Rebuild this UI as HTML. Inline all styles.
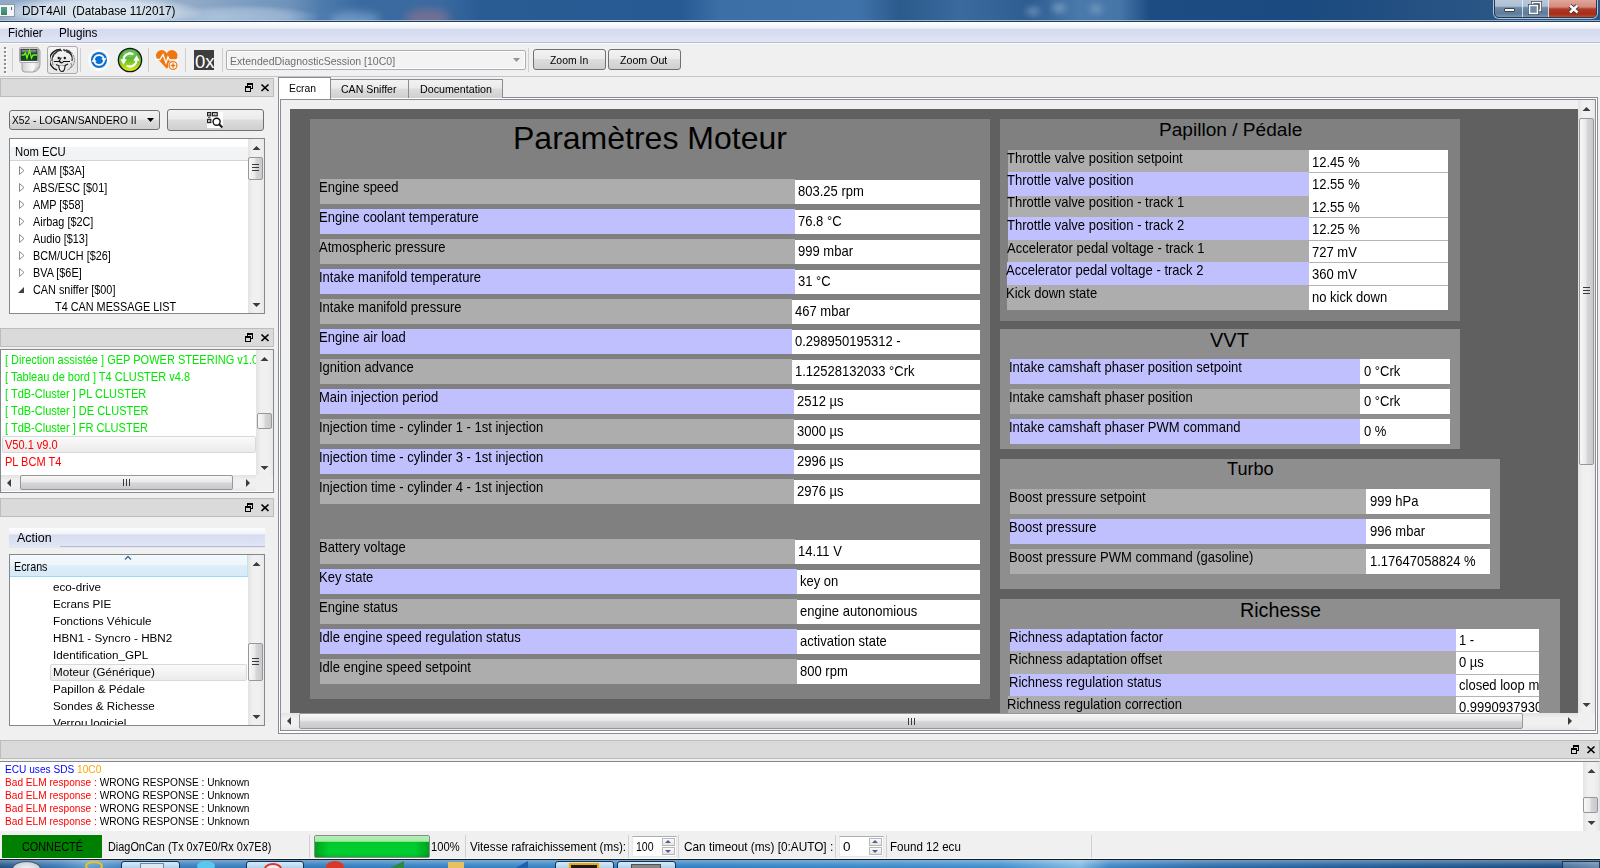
<!DOCTYPE html><html><head><meta charset="utf-8"><style>
*{margin:0;padding:0;box-sizing:border-box}
html,body{width:1600px;height:868px;overflow:hidden;background:#f0f0f0}
body{position:relative;font-family:"Liberation Sans",sans-serif;font-size:11px;color:#000}
div{position:absolute}
.t{white-space:nowrap;line-height:15px}
.lb{white-space:nowrap;font-size:14.3px;line-height:15px;transform:scaleX(0.91);transform-origin:0 0}
.dk{background:#dadada;border:1px solid #c5c5c5}
.sep{width:1px;background:#c8c8c8}
</style></head><body><div style="left:0;top:0;width:1600px;height:21px;overflow:hidden;background:radial-gradient(ellipse 105px 17px at 98px 12px,rgba(228,236,244,0.97) 0%,rgba(214,226,238,0.9) 65%,rgba(200,215,232,0) 100%),radial-gradient(ellipse 80px 12px at 240px 17px,rgba(185,205,228,0.85) 0%,rgba(185,205,228,0.5) 60%,rgba(185,205,228,0) 100%),linear-gradient(90deg,#8fa9c6 0px,#9ab2cc 150px,#8ea8c6 200px,#7b9cc0 250px,#6f92bb 290px,#4f7cad 320px,#3a6aa0 360px,#3a6aa0 440px,#2a5c94 480px,#275a92 680px,#3c6fa6 720px,#3f72a8 860px,#2b5a8c 900px,#3a6a9e 960px,#2d5d91 1030px,#4a7aab 1080px,#4676a8 1120px,#1d4c82 1150px,#1a4a7f 1300px,#234f82 1400px,#2a5686 1490px)"><div style="left:330px;top:12px;width:50px;height:16px;border-radius:50%;background:rgba(180,210,240,0.4);filter:blur(4px)"></div><div style="left:225px;top:10px;width:60px;height:14px;border-radius:50%;background:rgba(150,175,205,0.5);filter:blur(4px)"></div><div style="left:405px;top:9px;width:45px;height:18px;border-radius:50%;background:rgba(200,120,130,0.4);filter:blur(4px)"></div><div style="left:1026px;top:7px;width:14px;height:9px;border-radius:50%;background:rgba(200,220,240,0.35);filter:blur(3px)"></div><div style="left:1052px;top:3px;width:14px;height:10px;border-radius:50%;background:rgba(200,220,240,0.35);filter:blur(3px)"></div><div style="left:1090px;top:4px;width:12px;height:10px;border-radius:50%;background:rgba(200,220,240,0.3);filter:blur(3px)"></div></div>
<div style="left:0;top:20px;width:1600px;height:1px;background:rgba(190,215,240,0.7)"></div>
<div style="left:0;top:21px;width:1600px;height:1px;background:#243c5a"></div>
<div style="left:0;top:4px;width:15px;height:13px;background:#f4f4f4;border:1px solid #8d99a6;border-left:none"><div style="left:1px;top:2px;width:6px;height:8px;background:linear-gradient(#5aa0a0,#3c8060)"></div><div style="left:11px;top:2px;width:1px;height:3px;background:#2a7a8a"></div></div>
<div class="t" style="left:21.50px;top:2.97px;font-size:13.08px;line-height:16px;transform:scaleX(0.8995);transform-origin:0 0;">DDT4All&nbsp; (Database 11/2017)</div>
<div style="left:1493px;top:-3px;width:105px;height:22px;border:1px solid rgba(230,240,250,0.7);border-top:none;border-radius:0 0 6px 6px"></div>
<div style="left:1494px;top:-2px;width:103px;height:20px;border:1px solid #2a3a50;border-radius:0 0 5px 5px;overflow:hidden;background:linear-gradient(#bccbdb,#aebfd1 40%,#6f8ba8 48%,#5d7b9b 80%,#7a96b2)"><div style="left:54px;top:0;width:49px;height:20px;background:linear-gradient(#e3aaa0,#d48b7e 40%,#b03a25 50%,#a52d1a 75%,#c8603f)"></div><div style="left:27px;top:0;width:1px;height:20px;background:rgba(230,240,250,0.8)"></div><div style="left:53px;top:0;width:1px;height:20px;background:rgba(230,240,250,0.8)"></div></div>
<div style="left:1504px;top:8px;width:11px;height:4px;background:#fafafa;border:1px solid #3a4550;border-radius:1px"></div>
<svg style="position:absolute;left:1528px;top:1px" width="14" height="14"><rect x="4.5" y="1.5" width="8" height="8" fill="none" stroke="#3a4550" stroke-width="3"/><rect x="4.5" y="1.5" width="8" height="8" fill="none" stroke="#fafafa" stroke-width="1.5"/><rect x="1.5" y="4.5" width="8" height="8" fill="#6f8ba8" stroke="#3a4550" stroke-width="3"/><rect x="1.5" y="4.5" width="8" height="8" fill="#6f8ba8" stroke="#fafafa" stroke-width="1.5"/></svg>
<svg style="position:absolute;left:1566px;top:2px" width="16" height="13"><path d="M4,3.5 L11.5,10.5 M11.5,3.5 L4,10.5" stroke="#3a2a2a" stroke-width="4.4" stroke-linecap="butt"/><path d="M4,3.5 L11.5,10.5 M11.5,3.5 L4,10.5" stroke="#fafafa" stroke-width="2.6" stroke-linecap="butt"/></svg>
<div style="left:0;top:22px;width:1600px;height:20px;background:linear-gradient(#ffffff 0,#f2f4fa 25%,#e9ecf6 33%,#d4daee 36%,#dfe5f5 100%)"></div>
<div style="left:0;top:42px;width:1600px;height:1px;background:#b6bccc"></div>
<div class="t" style="left:8.40px;top:24.57px;font-size:12.79px;line-height:15px;transform:scaleX(0.9043);transform-origin:0 0;">Fichier</div>
<div class="t" style="left:59.40px;top:24.57px;font-size:12.79px;line-height:15px;transform:scaleX(0.9153);transform-origin:0 0;">Plugins</div>
<div style="left:0;top:43px;width:1600px;height:33px;background:#f0f0f0"></div>
<div style="left:0;top:76px;width:1600px;height:1px;background:#c4c4c4"></div>
<div style="left:4px;top:47px;width:2px;height:2px;background:#8c8c8c;box-shadow:1px 1px 0 #fff"></div>
<div style="left:4px;top:51px;width:2px;height:2px;background:#8c8c8c;box-shadow:1px 1px 0 #fff"></div>
<div style="left:4px;top:55px;width:2px;height:2px;background:#8c8c8c;box-shadow:1px 1px 0 #fff"></div>
<div style="left:4px;top:59px;width:2px;height:2px;background:#8c8c8c;box-shadow:1px 1px 0 #fff"></div>
<div style="left:4px;top:63px;width:2px;height:2px;background:#8c8c8c;box-shadow:1px 1px 0 #fff"></div>
<div style="left:4px;top:67px;width:2px;height:2px;background:#8c8c8c;box-shadow:1px 1px 0 #fff"></div>
<div style="left:4px;top:71px;width:2px;height:2px;background:#8c8c8c;box-shadow:1px 1px 0 #fff"></div>
<div style="left:0;top:43px;width:1600px;height:1px;background:#fbfbfb"></div>
<div style="left:12px;top:48px;width:1px;height:24px;background:#cfcfcf"></div>
<div style="left:80px;top:48px;width:1px;height:24px;background:#cfcfcf"></div>
<div style="left:148px;top:48px;width:1px;height:24px;background:#cfcfcf"></div>
<div style="left:185px;top:48px;width:1px;height:24px;background:#cfcfcf"></div>
<div style="left:222px;top:48px;width:1px;height:24px;background:#cfcfcf"></div>
<div style="left:528px;top:48px;width:1px;height:24px;background:#cfcfcf"></div>
<svg style="position:absolute;left:19px;top:47px" width="24" height="27"><defs><linearGradient id="scr" x1="0" y1="0" x2="0" y2="1"><stop offset="0" stop-color="#a9b3ae"/><stop offset="0.45" stop-color="#0b3a1e"/><stop offset="1" stop-color="#0b5a2a"/></linearGradient><linearGradient id="bdy" x1="0" y1="0" x2="1" y2="0"><stop offset="0" stop-color="#d0d0d0"/><stop offset="0.6" stop-color="#fafafa"/><stop offset="1" stop-color="#c8c8c8"/></linearGradient></defs><path d="M3,15 L3,22 Q3,25 6,25 L14,25 Q21,24 21,17 L21,4 Q21,2 19,2 Z" fill="url(#bdy)" stroke="#a0a0a0" stroke-width="1"/><path d="M14,25 Q17,20 21,20" fill="none" stroke="#b0b0b0" stroke-width="1"/><rect x="0.5" y="0.5" width="19" height="15" rx="1.5" fill="#f4f4f4" stroke="#a9a9a9"/><rect x="2" y="2.3" width="16" height="11" fill="url(#scr)" stroke="#252525" stroke-width="1"/><polyline points="2.5,8 5,8 6.5,6 8,11 10.5,3.5 12.5,11 14,8 18,8" fill="none" stroke="#7ef01a" stroke-width="1.3"/></svg>
<div style="left:47px;top:46px;width:31px;height:28px;border:1px solid #a9a9a9;border-radius:3px;background:linear-gradient(#f6f6f6,#eeeeee 45%,#e4e4e4 50%,#e9e9e9)"></div>
<svg style="position:absolute;left:50px;top:48px" width="25" height="25"><path d="M11,1.5 A10.5,10.5 0 0 0 7,22" fill="none" stroke="#1e1e1e" stroke-width="1.4"/><path d="M13,1.5 A10.5,10.5 0 0 1 17,22" fill="none" stroke="#6a6a6a" stroke-width="1" stroke-dasharray="2,1"/><path d="M3,9 Q5,3 11,1.5 M13,2 Q19,2 22,8 M2,13 Q2,7 5,5 M20,4 Q23,8 22,13 M5,6 Q9,1 12,3 M14,3 Q18,1 21,5 M16,4 Q20,4 22,9" fill="none" stroke="#333" stroke-width="1.1"/><path d="M21,15 Q23,18 20,20 M3,17 Q2,15 3,13" fill="none" stroke="#777" stroke-width="0.9"/><circle cx="8.7" cy="10" r="1.2" fill="#111"/><circle cx="14.8" cy="10" r="1.2" fill="#111"/><path d="M11.3,9.5 L9,13.3 L11.5,14.5" fill="none" stroke="#111" stroke-width="1.1"/><path d="M4,13.5 H9.5 Q11.5,16.5 13.5,13.5 H20" fill="none" stroke="#111" stroke-width="1.2"/><path d="M6,16.5 Q12,20 18,16" fill="none" stroke="#222" stroke-width="1.1"/><path d="M8.8,17.5 Q9,23.5 12,23.5 Q15,23.5 15,17.5" fill="#eee" stroke="#111" stroke-width="1.1"/></svg>
<svg style="position:absolute;left:87px;top:48px" width="24" height="24"><circle cx="12" cy="12" r="11" fill="#fbfbfb" opacity="0.85"/><circle cx="12" cy="12" r="8" fill="#0a6fd0"/><path d="M7.1,11.1 A5,5 0 0 1 16.9,11.1" fill="none" stroke="#fff" stroke-width="1.8"/><polygon points="14.4,10.3 19.6,10.3 17,14" fill="#fff"/><path d="M16.9,12.9 A5,5 0 0 1 7.1,12.9" fill="none" stroke="#fff" stroke-width="1.8"/><polygon points="4.4,13.7 9.6,13.7 7,10" fill="#fff"/></svg>
<svg style="position:absolute;left:117px;top:47px" width="26" height="26"><defs><linearGradient id="grn" x1="0" y1="0" x2="0" y2="1"><stop offset="0" stop-color="#3aa83a"/><stop offset="0.5" stop-color="#66be30"/><stop offset="0.85" stop-color="#b8e018"/><stop offset="1" stop-color="#e8f010"/></linearGradient></defs><circle cx="13" cy="13" r="12.3" fill="#121212"/><circle cx="13" cy="13" r="11" fill="url(#grn)"/><ellipse cx="13" cy="6.5" rx="7" ry="3.5" fill="#fff" opacity="0.18"/><path d="M16.25,7.37 A6.5,6.5 0 0 0 6.5,12.5" fill="none" stroke="#fff" stroke-width="2.1"/><polygon points="3.3,12.3 9.7,12.3 6.5,17.8" fill="#fff"/><path d="M9.75,18.63 A6.5,6.5 0 0 0 19.5,13.5" fill="none" stroke="#fff" stroke-width="2.1"/><polygon points="16.3,13.7 22.7,13.7 19.5,8.2" fill="#fff"/></svg>
<svg style="position:absolute;left:155px;top:49px" width="25" height="22"><circle cx="6.6" cy="6.6" r="5.6" fill="#ee7711"/><circle cx="16.9" cy="6.6" r="5.6" fill="#ee7711"/><polygon points="1.2,8.6 22.3,8.6 11.75,19.8" fill="#ee7711"/><polyline points="0.5,10.5 5,10.5 8,5.5 11,14 13,8 14.5,11 23,11" fill="none" stroke="#fff" stroke-width="1.3"/><circle cx="18" cy="16.5" r="5" fill="#fff"/><circle cx="18" cy="16.5" r="3.9" fill="none" stroke="#ee7711" stroke-width="1.3"/><path d="M18,14.2 V18.8 M15.7,16.5 H20.3" stroke="#ee7711" stroke-width="1.5"/></svg>
<div style="left:194px;top:50px;width:20px;height:20px;background:#3d3d3d;overflow:hidden"><div class="t" style="left:1px;top:3px;font-size:18.5px;line-height:18px;color:#fff">0x</div></div>
<div style="left:226px;top:50px;width:300px;height:20px;border:1px solid #a9aeb4;border-radius:2px;background:#f3f3f3;box-shadow:inset 0 0 0 1px #fff"></div>
<div class="t" style="left:229.60px;top:53.52px;font-size:11.48px;line-height:14px;transform:scaleX(0.9184);transform-origin:0 0;color:#6e6e6e">ExtendedDiagnosticSession [10C0]</div>
<svg style="position:absolute;left:512px;top:57px" width="10" height="7"><polygon points="1,1 8,1 4.5,5" fill="#959595"/></svg>
<div style="left:533px;top:49px;width:73px;height:21px;border:1px solid #707070;border-radius:3px;background:linear-gradient(#f2f2f2,#ebebeb 45%,#dddddd 50%,#cfcfcf)"></div>
<div class="t" style="left:549.80px;top:53.47px;font-size:11.63px;line-height:14px;transform:scaleX(0.8951);transform-origin:0 0;">Zoom In</div>
<div style="left:608px;top:49px;width:73px;height:21px;border:1px solid #707070;border-radius:3px;background:linear-gradient(#f2f2f2,#ebebeb 45%,#dddddd 50%,#cfcfcf)"></div>
<div class="t" style="left:620.40px;top:53.47px;font-size:11.63px;line-height:14px;transform:scaleX(0.9151);transform-origin:0 0;">Zoom Out</div>
<div style="left:0px;top:78px;width:274px;height:19px;background:#dadada;border:1px solid #bdbdbd"></div>
<svg style="position:absolute;left:245px;top:82px" width="26" height="11"><rect x="2.5" y="1.5" width="5" height="5" fill="none" stroke="#000" stroke-width="1"/><rect x="2" y="1" width="6" height="2" fill="#000"/><rect x="0.5" y="4.5" width="5" height="5" fill="#dadada" stroke="#000" stroke-width="1"/><rect x="0" y="4" width="6" height="2" fill="#000"/><path d="M16.5,2.5 L23.5,9 M23.5,2.5 L16.5,9" stroke="#000" stroke-width="1.7"/></svg>
<div style="left:9px;top:110px;width:151px;height:20px;border:1px solid #707070;border-radius:3px;background:linear-gradient(#f2f2f2,#ebebeb 45%,#dddddd 50%,#cfcfcf)"></div>
<div class="t" style="left:12.40px;top:113.37px;font-size:11.34px;line-height:14px;transform:scaleX(0.8990);transform-origin:0 0;">X52 - LOGAN/SANDERO II</div>
<svg style="position:absolute;left:146px;top:117px" width="10" height="7"><polygon points="1,1 8,1 4.5,5" fill="#000"/></svg>
<div style="left:167px;top:109px;width:97px;height:22px;border:1px solid #707070;border-radius:3px;background:linear-gradient(#f2f2f2,#ebebeb 45%,#dddddd 50%,#cfcfcf)"></div>
<div style="left:207px;top:112px;width:16px;height:16px;background:#fff"></div>
<svg style="position:absolute;left:207px;top:112px" width="17" height="17"><rect x="0.6" y="0.6" width="3.2" height="3.2" fill="none" stroke="#222" stroke-width="1.2"/><rect x="1.8" y="1.8" width="0.9" height="0.9" fill="#222"/><rect x="5.6" y="0.6" width="4.6" height="3.2" fill="none" stroke="#222" stroke-width="1.2"/><rect x="7.4" y="1.7" width="1" height="1" fill="#222"/><rect x="0.6" y="7.4" width="3.2" height="3.2" fill="none" stroke="#222" stroke-width="1.2"/><rect x="1.8" y="8.6" width="0.9" height="0.9" fill="#222"/><path d="M1,5.6 H3.4" stroke="#333" stroke-width="0.9"/><circle cx="9.6" cy="9.7" r="3.5" fill="#fff" stroke="#111" stroke-width="1.4"/><path d="M12.1,12.3 L15.4,15.4" stroke="#111" stroke-width="2"/></svg>
<div style="left:9px;top:138px;width:256px;height:176px;border:1px solid #828790;background:#fff"></div>
<div style="left:10px;top:139px;width:238px;height:22px;background:linear-gradient(#ffffff,#ffffff 35%,#f3f4f6 40%,#f1f2f4);border-bottom:1px solid #d5d5d5"></div>
<div class="t" style="left:14.70px;top:143.57px;font-size:12.79px;line-height:15px;transform:scaleX(0.8808);transform-origin:0 0;">Nom ECU</div>
<div style="left:248px;top:139px;width:16px;height:174px;background:linear-gradient(90deg,#e3e3e3,#f0f0f0 30%,#f0f0f0 70%,#e8e8e8)"></div>
<svg style="position:absolute;left:252px;top:145px" width="9" height="6"><polygon points="0.5,5 8.5,5 4.5,1" fill="#3c3c3c"/></svg>
<svg style="position:absolute;left:252px;top:302px" width="9" height="6"><polygon points="0.5,1 8.5,1 4.5,5" fill="#3c3c3c"/></svg>
<div style="left:248px;top:157px;width:15px;height:23px;border:1px solid #979797;border-radius:2px;background:linear-gradient(90deg,#f8f8f8,#e9e9e9 45%,#d6d6d8 55%,#c9c9cc)"></div>
<div style="left:252px;top:164px;width:7px;height:1px;background:#3a3a3a"></div>
<div style="left:252px;top:167px;width:7px;height:1px;background:#3a3a3a"></div>
<div style="left:252px;top:170px;width:7px;height:1px;background:#3a3a3a"></div>
<div class="t" style="left:33.40px;top:164.27px;font-size:12.21px;line-height:15px;transform:scaleX(0.8891);transform-origin:0 0;">AAM [$3A]</div>
<svg style="position:absolute;left:18px;top:165px" width="8" height="10"><path d="M1.5,1.5 L6,5.5 L1.5,9.5 Z" fill="#fff" stroke="#8a8a8a" stroke-width="1"/></svg>
<div class="t" style="left:33.40px;top:181.27px;font-size:12.21px;line-height:15px;transform:scaleX(0.8891);transform-origin:0 0;">ABS/ESC [$01]</div>
<svg style="position:absolute;left:18px;top:182px" width="8" height="10"><path d="M1.5,1.5 L6,5.5 L1.5,9.5 Z" fill="#fff" stroke="#8a8a8a" stroke-width="1"/></svg>
<div class="t" style="left:33.40px;top:198.27px;font-size:12.21px;line-height:15px;transform:scaleX(0.8891);transform-origin:0 0;">AMP [$58]</div>
<svg style="position:absolute;left:18px;top:199px" width="8" height="10"><path d="M1.5,1.5 L6,5.5 L1.5,9.5 Z" fill="#fff" stroke="#8a8a8a" stroke-width="1"/></svg>
<div class="t" style="left:33.40px;top:215.27px;font-size:12.21px;line-height:15px;transform:scaleX(0.8891);transform-origin:0 0;">Airbag [$2C]</div>
<svg style="position:absolute;left:18px;top:216px" width="8" height="10"><path d="M1.5,1.5 L6,5.5 L1.5,9.5 Z" fill="#fff" stroke="#8a8a8a" stroke-width="1"/></svg>
<div class="t" style="left:33.40px;top:232.27px;font-size:12.21px;line-height:15px;transform:scaleX(0.8891);transform-origin:0 0;">Audio [$13]</div>
<svg style="position:absolute;left:18px;top:233px" width="8" height="10"><path d="M1.5,1.5 L6,5.5 L1.5,9.5 Z" fill="#fff" stroke="#8a8a8a" stroke-width="1"/></svg>
<div class="t" style="left:33.40px;top:249.27px;font-size:12.21px;line-height:15px;transform:scaleX(0.8891);transform-origin:0 0;">BCM/UCH [$26]</div>
<svg style="position:absolute;left:18px;top:250px" width="8" height="10"><path d="M1.5,1.5 L6,5.5 L1.5,9.5 Z" fill="#fff" stroke="#8a8a8a" stroke-width="1"/></svg>
<div class="t" style="left:33.40px;top:266.27px;font-size:12.21px;line-height:15px;transform:scaleX(0.8891);transform-origin:0 0;">BVA [$6E]</div>
<svg style="position:absolute;left:18px;top:267px" width="8" height="10"><path d="M1.5,1.5 L6,5.5 L1.5,9.5 Z" fill="#fff" stroke="#8a8a8a" stroke-width="1"/></svg>
<div class="t" style="left:33.40px;top:283.27px;font-size:12.21px;line-height:15px;transform:scaleX(0.8891);transform-origin:0 0;">CAN sniffer [$00]</div>
<svg style="position:absolute;left:18px;top:286px" width="8" height="8"><path d="M6,1 L6,7 L0,7 Z" fill="#404040"/></svg>
<div style="left:10px;top:298px;width:238px;height:15px;overflow:hidden"><div class="t" style="left:44.50px;top:2.27px;font-size:12.21px;line-height:15px;transform:scaleX(0.8891);transform-origin:0 0;">T4 CAN MESSAGE LIST</div></div>
<div style="left:0px;top:328px;width:274px;height:19px;background:#dadada;border:1px solid #bdbdbd"></div>
<svg style="position:absolute;left:245px;top:332px" width="26" height="11"><rect x="2.5" y="1.5" width="5" height="5" fill="none" stroke="#000" stroke-width="1"/><rect x="2" y="1" width="6" height="2" fill="#000"/><rect x="0.5" y="4.5" width="5" height="5" fill="#dadada" stroke="#000" stroke-width="1"/><rect x="0" y="4" width="6" height="2" fill="#000"/><path d="M16.5,2.5 L23.5,9 M23.5,2.5 L16.5,9" stroke="#000" stroke-width="1.7"/></svg>
<div style="left:0px;top:349px;width:274px;height:144px;border:1px solid #828790;background:#fff"></div>
<div style="left:2px;top:436px;width:254px;height:17px;border:1px solid #d9d9d9;border-radius:2px;background:linear-gradient(#fafafa,#ebebeb)"></div>
<div style="left:1px;top:350px;width:255px;height:125px;overflow:hidden"><div class="t" style="left:3.60px;top:2.82px;font-size:12.06px;line-height:14px;transform:scaleX(0.9138);transform-origin:0 0;color:#00e800">[ Direction assistée ] GEP POWER STEERING v1.0</div><div class="t" style="left:3.60px;top:19.82px;font-size:12.06px;line-height:14px;transform:scaleX(0.9138);transform-origin:0 0;color:#00e800">[ Tableau de bord ] T4 CLUSTER v4.8</div><div class="t" style="left:3.60px;top:36.82px;font-size:12.06px;line-height:14px;transform:scaleX(0.9138);transform-origin:0 0;color:#00e800">[ TdB-Cluster ] PL CLUSTER</div><div class="t" style="left:3.60px;top:53.82px;font-size:12.06px;line-height:14px;transform:scaleX(0.9138);transform-origin:0 0;color:#00e800">[ TdB-Cluster ] DE CLUSTER</div><div class="t" style="left:3.60px;top:70.82px;font-size:12.06px;line-height:14px;transform:scaleX(0.9138);transform-origin:0 0;color:#00e800">[ TdB-Cluster ] FR CLUSTER</div><div class="t" style="left:3.60px;top:87.82px;font-size:12.06px;line-height:14px;transform:scaleX(0.9138);transform-origin:0 0;color:#ff0000">V50.1 v9.0</div><div class="t" style="left:3.60px;top:104.82px;font-size:12.06px;line-height:14px;transform:scaleX(0.9138);transform-origin:0 0;color:#ff0000">PL BCM T4</div></div>
<div style="left:256px;top:350px;width:17px;height:126px;background:linear-gradient(90deg,#e3e3e3,#f0f0f0 30%,#f0f0f0 70%,#e8e8e8)"></div>
<svg style="position:absolute;left:260px;top:356px" width="9" height="6"><polygon points="0.5,5 8.5,5 4.5,1" fill="#3c3c3c"/></svg>
<svg style="position:absolute;left:260px;top:465px" width="9" height="6"><polygon points="0.5,1 8.5,1 4.5,5" fill="#3c3c3c"/></svg>
<div style="left:257px;top:413px;width:15px;height:16px;border:1px solid #979797;border-radius:2px;background:linear-gradient(90deg,#f8f8f8,#e9e9e9 45%,#d6d6d8 55%,#c9c9cc)"></div>
<div style="left:1px;top:475px;width:255px;height:16px;background:linear-gradient(#e3e3e3,#f0f0f0 30%,#f0f0f0 70%,#e8e8e8)"></div>
<div style="left:7px;top:479px;width:0;height:0;border-top:4px solid transparent;border-bottom:4px solid transparent;border-right:4px solid #3c3c3c"></div>
<div style="left:246px;top:479px;width:0;height:0;border-top:4px solid transparent;border-bottom:4px solid transparent;border-left:4px solid #3c3c3c"></div>
<div style="left:20px;top:475px;width:213px;height:15px;border:1px solid #979797;border-radius:2px;background:linear-gradient(#f8f8f8,#e9e9e9 45%,#d6d6d8 55%,#c9c9cc)"></div>
<div style="left:123px;top:479px;width:1px;height:7px;background:#3a3a3a"></div>
<div style="left:126px;top:479px;width:1px;height:7px;background:#3a3a3a"></div>
<div style="left:129px;top:479px;width:1px;height:7px;background:#3a3a3a"></div>
<div style="left:256px;top:475px;width:17px;height:16px;background:#f0f0f0"></div>
<div style="left:0px;top:498px;width:274px;height:19px;background:#dadada;border:1px solid #bdbdbd"></div>
<svg style="position:absolute;left:245px;top:502px" width="26" height="11"><rect x="2.5" y="1.5" width="5" height="5" fill="none" stroke="#000" stroke-width="1"/><rect x="2" y="1" width="6" height="2" fill="#000"/><rect x="0.5" y="4.5" width="5" height="5" fill="#dadada" stroke="#000" stroke-width="1"/><rect x="0" y="4" width="6" height="2" fill="#000"/><path d="M16.5,2.5 L23.5,9 M23.5,2.5 L16.5,9" stroke="#000" stroke-width="1.7"/></svg>
<div style="left:9px;top:528px;width:256px;height:20px;background:linear-gradient(#fdfdfe 0,#f1f3fa 30%,#d6dcef 34%,#e3e7f5 100%)"></div>
<div style="left:60px;top:546px;width:205px;height:1px;background:#b4bdd3"></div>
<div class="t" style="left:17.00px;top:531.47px;font-size:12.50px;line-height:15px;transform:scaleX(0.9957);transform-origin:0 0;">Action</div>
<div style="left:9px;top:554px;width:256px;height:172px;border:1px solid #828790;background:#fff"></div>
<div style="left:10px;top:555px;width:238px;height:22px;background:linear-gradient(#f4f9fd 0,#eef6fb 45%,#dcedf8 52%,#d8eaf6 100%);border-bottom:1px solid #96d9f9;border-right:1px solid #c0e2f5"></div>
<svg style="position:absolute;left:124px;top:555px" width="9" height="6"><path d="M1,4.5 L4,1.5 L7,4.5" fill="none" stroke="#4a6f8c" stroke-width="1.5"/></svg>
<div class="t" style="left:14.40px;top:558.77px;font-size:12.79px;line-height:15px;transform:scaleX(0.8422);transform-origin:0 0;">Ecrans</div>
<div style="left:248px;top:555px;width:16px;height:170px;background:linear-gradient(90deg,#e3e3e3,#f0f0f0 30%,#f0f0f0 70%,#e8e8e8)"></div>
<svg style="position:absolute;left:252px;top:561px" width="9" height="6"><polygon points="0.5,5 8.5,5 4.5,1" fill="#3c3c3c"/></svg>
<svg style="position:absolute;left:252px;top:714px" width="9" height="6"><polygon points="0.5,1 8.5,1 4.5,5" fill="#3c3c3c"/></svg>
<div style="left:248px;top:643px;width:15px;height:38px;border:1px solid #979797;border-radius:2px;background:linear-gradient(90deg,#f8f8f8,#e9e9e9 45%,#d6d6d8 55%,#c9c9cc)"></div>
<div style="left:252px;top:658px;width:7px;height:1px;background:#3a3a3a"></div>
<div style="left:252px;top:661px;width:7px;height:1px;background:#3a3a3a"></div>
<div style="left:252px;top:664px;width:7px;height:1px;background:#3a3a3a"></div>
<div style="left:50px;top:664px;width:197px;height:17px;border:1px solid #d9d9d9;border-radius:2px;background:linear-gradient(#fafafa,#ebebeb)"></div>
<div style="left:10px;top:577px;width:238px;height:148px;overflow:hidden"><div class="t" style="left:43.30px;top:3.37px;font-size:11.63px;line-height:14px;transform:scaleX(1.0034);transform-origin:0 0;">eco-drive</div><div class="t" style="left:43.30px;top:20.37px;font-size:11.63px;line-height:14px;transform:scaleX(1.0034);transform-origin:0 0;">Ecrans PIE</div><div class="t" style="left:43.30px;top:37.37px;font-size:11.63px;line-height:14px;transform:scaleX(1.0034);transform-origin:0 0;">Fonctions Véhicule</div><div class="t" style="left:43.30px;top:54.37px;font-size:11.63px;line-height:14px;transform:scaleX(1.0034);transform-origin:0 0;">HBN1 - Syncro - HBN2</div><div class="t" style="left:43.30px;top:71.37px;font-size:11.63px;line-height:14px;transform:scaleX(1.0034);transform-origin:0 0;">Identification_GPL</div><div class="t" style="left:43.30px;top:88.37px;font-size:11.63px;line-height:14px;transform:scaleX(1.0034);transform-origin:0 0;">Moteur (Générique)</div><div class="t" style="left:43.30px;top:105.37px;font-size:11.63px;line-height:14px;transform:scaleX(1.0034);transform-origin:0 0;">Papillon &amp; Pédale</div><div class="t" style="left:43.30px;top:122.37px;font-size:11.63px;line-height:14px;transform:scaleX(1.0034);transform-origin:0 0;">Sondes &amp; Richesse</div><div class="t" style="left:43.30px;top:139.37px;font-size:11.63px;line-height:14px;transform:scaleX(1.0034);transform-origin:0 0;">Verrou logiciel</div></div>
<div style="left:278px;top:97px;width:320px;height:637px;border:1px solid #898c95;width:1320px;background:#fff"></div>
<div style="left:280px;top:99px;width:1316px;height:632px;border:1px solid #898c95;background:#f0f0f0"></div>
<div style="left:330px;top:79px;width:79px;height:19px;border:1px solid #898c95;border-bottom:none;background:linear-gradient(#f2f2f2,#ebebeb 45%,#dddddd 50%,#cfcfcf)"></div>
<div style="left:408px;top:79px;width:95px;height:19px;border:1px solid #898c95;border-bottom:none;background:linear-gradient(#f2f2f2,#ebebeb 45%,#dddddd 50%,#cfcfcf)"></div>
<div style="left:278px;top:77px;width:53px;height:22px;border:1px solid #898c95;border-bottom:none;background:#fff"></div>
<div class="t" style="left:289.20px;top:81.47px;font-size:11.63px;line-height:14px;transform:scaleX(0.8897);transform-origin:0 0;">Ecran</div>
<div class="t" style="left:340.50px;top:82.47px;font-size:11.63px;line-height:14px;transform:scaleX(0.9074);transform-origin:0 0;">CAN Sniffer</div>
<div class="t" style="left:420.00px;top:82.47px;font-size:11.63px;line-height:14px;transform:scaleX(0.9195);transform-origin:0 0;">Documentation</div>
<div style="left:290px;top:109px;width:1288px;height:604px;background:#606060"></div>
<div style="left:290px;top:109px;width:1288px;height:604px;overflow:hidden">
<div style="left:20px;top:10px;width:680px;height:580px;background:#808080"></div>
<div class="t" style="left:223px;top:11px;font-size:32px;line-height:36px">Paramètres Moteur</div>
<div style="left:30px;top:70px;width:475px;height:25px;background:#adadad"><div class="lb" style="left:-1px;top:1px">Engine speed</div></div>
<div style="left:505px;top:71px;width:185px;height:24px;background:#fff;overflow:hidden;"><div class="lb" style="left:3px;top:4px">803.25 rpm</div></div>
<div style="left:30px;top:100px;width:475px;height:25px;background:#c0c0ff"><div class="lb" style="left:-1px;top:1px">Engine coolant temperature</div></div>
<div style="left:505px;top:101px;width:185px;height:24px;background:#fff;overflow:hidden;"><div class="lb" style="left:3px;top:4px">76.8 °C</div></div>
<div style="left:30px;top:130px;width:475px;height:25px;background:#adadad"><div class="lb" style="left:-1px;top:1px">Atmospheric pressure</div></div>
<div style="left:505px;top:131px;width:185px;height:24px;background:#fff;overflow:hidden;"><div class="lb" style="left:3px;top:4px">999 mbar</div></div>
<div style="left:30px;top:160px;width:475px;height:25px;background:#c0c0ff"><div class="lb" style="left:-1px;top:1px">Intake manifold temperature</div></div>
<div style="left:505px;top:161px;width:185px;height:24px;background:#fff;overflow:hidden;"><div class="lb" style="left:3px;top:4px">31 °C</div></div>
<div style="left:30px;top:190px;width:472px;height:25px;background:#adadad"><div class="lb" style="left:-1px;top:1px">Intake manifold pressure</div></div>
<div style="left:502px;top:191px;width:188px;height:24px;background:#fff;overflow:hidden;"><div class="lb" style="left:3px;top:4px">467 mbar</div></div>
<div style="left:30px;top:220px;width:472px;height:25px;background:#c0c0ff"><div class="lb" style="left:-1px;top:1px">Engine air load</div></div>
<div style="left:502px;top:221px;width:188px;height:24px;background:#fff;overflow:hidden;"><div class="lb" style="left:3px;top:4px">0.298950195312 -</div></div>
<div style="left:30px;top:250px;width:472px;height:25px;background:#adadad"><div class="lb" style="left:-1px;top:1px">Ignition advance</div></div>
<div style="left:502px;top:251px;width:188px;height:24px;background:#fff;overflow:hidden;"><div class="lb" style="left:3px;top:4px">1.12528132033 °Crk</div></div>
<div style="left:30px;top:280px;width:474px;height:25px;background:#c0c0ff"><div class="lb" style="left:-1px;top:1px">Main injection period</div></div>
<div style="left:504px;top:281px;width:186px;height:24px;background:#fff;overflow:hidden;"><div class="lb" style="left:3px;top:4px">2512 µs</div></div>
<div style="left:30px;top:310px;width:474px;height:25px;background:#adadad"><div class="lb" style="left:-1px;top:1px">Injection time - cylinder 1 - 1st injection</div></div>
<div style="left:504px;top:311px;width:186px;height:24px;background:#fff;overflow:hidden;"><div class="lb" style="left:3px;top:4px">3000 µs</div></div>
<div style="left:30px;top:340px;width:474px;height:25px;background:#c0c0ff"><div class="lb" style="left:-1px;top:1px">Injection time - cylinder 3 - 1st injection</div></div>
<div style="left:504px;top:341px;width:186px;height:24px;background:#fff;overflow:hidden;"><div class="lb" style="left:3px;top:4px">2996 µs</div></div>
<div style="left:30px;top:370px;width:474px;height:25px;background:#adadad"><div class="lb" style="left:-1px;top:1px">Injection time - cylinder 4 - 1st injection</div></div>
<div style="left:504px;top:371px;width:186px;height:24px;background:#fff;overflow:hidden;"><div class="lb" style="left:3px;top:4px">2976 µs</div></div>
<div style="left:30px;top:430px;width:475px;height:25px;background:#adadad"><div class="lb" style="left:-1px;top:1px">Battery voltage</div></div>
<div style="left:505px;top:431px;width:185px;height:24px;background:#fff;overflow:hidden;"><div class="lb" style="left:3px;top:4px">14.11 V</div></div>
<div style="left:30px;top:460px;width:477px;height:25px;background:#c0c0ff"><div class="lb" style="left:-1px;top:1px">Key state</div></div>
<div style="left:507px;top:461px;width:183px;height:24px;background:#fff;overflow:hidden;"><div class="lb" style="left:3px;top:4px">key on</div></div>
<div style="left:30px;top:490px;width:477px;height:25px;background:#adadad"><div class="lb" style="left:-1px;top:1px">Engine status</div></div>
<div style="left:507px;top:491px;width:183px;height:24px;background:#fff;overflow:hidden;"><div class="lb" style="left:3px;top:4px">engine autonomious</div></div>
<div style="left:30px;top:520px;width:477px;height:25px;background:#c0c0ff"><div class="lb" style="left:-1px;top:1px">Idle engine speed regulation status</div></div>
<div style="left:507px;top:521px;width:183px;height:24px;background:#fff;overflow:hidden;"><div class="lb" style="left:3px;top:4px">activation state</div></div>
<div style="left:30px;top:550px;width:477px;height:25px;background:#adadad"><div class="lb" style="left:-1px;top:1px">Idle engine speed setpoint</div></div>
<div style="left:507px;top:551px;width:183px;height:24px;background:#fff;overflow:hidden;"><div class="lb" style="left:3px;top:4px">800 rpm</div></div>
<div style="left:710px;top:10px;width:460px;height:202px;background:#808080"></div>
<div class="t" style="left:869px;top:10px;font-size:19.1px;line-height:21px">Papillon / Pédale</div>
<div style="left:1019px;top:41px;width:139px;height:160px;background:#fff"></div>
<div style="left:718px;top:41px;width:301px;height:22px;background:#adadad"><div class="lb" style="left:-1px;top:1px">Throttle valve position setpoint</div></div>
<div class="t" style="left:1022px;top:46px;font-size:14.3px;transform:scaleX(0.91);transform-origin:0 0">12.45 %</div>
<div style="left:718px;top:63px;width:301px;height:24px;background:#c0c0ff"><div class="lb" style="left:-1px;top:1px">Throttle valve position</div></div>
<div style="left:1019px;top:63px;width:139px;height:1px;background:#b4b4b4"></div>
<div class="t" style="left:1022px;top:68px;font-size:14.3px;transform:scaleX(0.91);transform-origin:0 0">12.55 %</div>
<div style="left:718px;top:87px;width:301px;height:21px;background:#adadad"><div class="lb" style="left:-1px;top:-1px">Throttle valve position - track 1</div></div>
<div class="t" style="left:1022px;top:91px;font-size:14.3px;transform:scaleX(0.91);transform-origin:0 0">12.55 %</div>
<div style="left:718px;top:108px;width:301px;height:23px;background:#c0c0ff"><div class="lb" style="left:-1px;top:1px">Throttle valve position - track 2</div></div>
<div style="left:1019px;top:108px;width:139px;height:1px;background:#b4b4b4"></div>
<div class="t" style="left:1022px;top:113px;font-size:14.3px;transform:scaleX(0.91);transform-origin:0 0">12.25 %</div>
<div style="left:718px;top:131px;width:301px;height:22px;background:#adadad"><div class="lb" style="left:-1px;top:1px">Accelerator pedal voltage - track 1</div></div>
<div style="left:1019px;top:131px;width:139px;height:1px;background:#b4b4b4"></div>
<div class="t" style="left:1022px;top:136px;font-size:14.3px;transform:scaleX(0.91);transform-origin:0 0">727 mV</div>
<div style="left:717px;top:153px;width:302px;height:23px;background:#c0c0ff"><div class="lb" style="left:-1px;top:1px">Accelerator pedal voltage - track 2</div></div>
<div style="left:1019px;top:153px;width:139px;height:1px;background:#b4b4b4"></div>
<div class="t" style="left:1022px;top:158px;font-size:14.3px;transform:scaleX(0.91);transform-origin:0 0">360 mV</div>
<div style="left:717px;top:176px;width:302px;height:25px;background:#adadad"><div class="lb" style="left:-1px;top:1px">Kick down state</div></div>
<div style="left:1019px;top:176px;width:139px;height:1px;background:#b4b4b4"></div>
<div class="t" style="left:1022px;top:181px;font-size:14.3px;transform:scaleX(0.91);transform-origin:0 0">no kick down</div>
<div style="left:710px;top:220px;width:460px;height:120px;background:#8e8e8e"></div>
<div class="t" style="left:920px;top:220px;font-size:20px;line-height:23px">VVT</div>
<div style="left:720px;top:250px;width:350px;height:25px;background:#c0c0ff"><div class="lb" style="left:-1px;top:1px">Intake camshaft phaser position setpoint</div></div>
<div style="left:1070px;top:250px;width:90px;height:25px;background:#fff;overflow:hidden;"><div class="lb" style="left:4px;top:5px">0 °Crk</div></div>
<div style="left:720px;top:280px;width:350px;height:25px;background:#adadad"><div class="lb" style="left:-1px;top:1px">Intake camshaft phaser position</div></div>
<div style="left:1070px;top:280px;width:90px;height:25px;background:#fff;overflow:hidden;"><div class="lb" style="left:4px;top:5px">0 °Crk</div></div>
<div style="left:720px;top:310px;width:350px;height:25px;background:#c0c0ff"><div class="lb" style="left:-1px;top:1px">Intake camshaft phaser PWM command</div></div>
<div style="left:1070px;top:310px;width:90px;height:25px;background:#fff;overflow:hidden;"><div class="lb" style="left:4px;top:5px">0 %</div></div>
<div style="left:710px;top:350px;width:500px;height:130px;background:#8e8e8e"></div>
<div class="t" style="left:937px;top:350px;font-size:18.1px;line-height:21px">Turbo</div>
<div style="left:720px;top:380px;width:356px;height:25px;background:#adadad"><div class="lb" style="left:-1px;top:1px">Boost pressure setpoint</div></div>
<div style="left:1076px;top:380px;width:124px;height:25px;background:#fff;overflow:hidden;"><div class="lb" style="left:4px;top:5px">999 hPa</div></div>
<div style="left:720px;top:410px;width:356px;height:25px;background:#c0c0ff"><div class="lb" style="left:-1px;top:1px">Boost pressure</div></div>
<div style="left:1076px;top:410px;width:124px;height:25px;background:#fff;overflow:hidden;"><div class="lb" style="left:4px;top:5px">996 mbar</div></div>
<div style="left:720px;top:440px;width:356px;height:25px;background:#adadad"><div class="lb" style="left:-1px;top:1px">Boost pressure PWM command (gasoline)</div></div>
<div style="left:1076px;top:440px;width:124px;height:25px;background:#fff;overflow:hidden;"><div class="lb" style="left:4px;top:5px">1.17647058824 %</div></div>
<div style="left:710px;top:490px;width:560px;height:120px;background:#8e8e8e"></div>
<div class="t" style="left:950px;top:490px;font-size:19.7px;line-height:23px">Richesse</div>
<div style="left:1166px;top:520px;width:83px;height:90px;background:#fff;overflow:hidden"><div class="lb" style="left:3px;top:4px">1 -</div><div style="left:0;top:22px;width:83px;height:1px;background:#b4b4b4"></div><div class="lb" style="left:3px;top:26px">0 µs</div><div style="left:0;top:45px;width:83px;height:1px;background:#b4b4b4"></div><div class="lb" style="left:3px;top:49px">closed loop mode</div><div style="left:0;top:67px;width:83px;height:1px;background:#b4b4b4"></div><div class="lb" style="left:3px;top:71px">0.99909379306</div></div>
<div style="left:720px;top:520px;width:446px;height:22px;background:#c0c0ff"><div class="lb" style="left:-1px;top:1px">Richness adaptation factor</div></div>
<div style="left:720px;top:542px;width:446px;height:23px;background:#adadad"><div class="lb" style="left:-1px;top:1px">Richness adaptation offset</div></div>
<div style="left:720px;top:565px;width:446px;height:22px;background:#c0c0ff"><div class="lb" style="left:-1px;top:1px">Richness regulation status</div></div>
<div style="left:718px;top:587px;width:448px;height:22px;background:#adadad"><div class="lb" style="left:-1px;top:1px">Richness regulation correction</div></div>
</div>
<div style="left:1578px;top:100px;width:17px;height:613px;background:linear-gradient(90deg,#e3e3e3,#f0f0f0 30%,#f0f0f0 70%,#e8e8e8)"></div>
<svg style="position:absolute;left:1582px;top:106px" width="9" height="6"><polygon points="0.5,5 8.5,5 4.5,1" fill="#3c3c3c"/></svg>
<svg style="position:absolute;left:1582px;top:702px" width="9" height="6"><polygon points="0.5,1 8.5,1 4.5,5" fill="#3c3c3c"/></svg>
<div style="left:1579px;top:118px;width:15px;height:347px;border:1px solid #979797;border-radius:2px;background:linear-gradient(90deg,#f8f8f8,#e9e9e9 45%,#d6d6d8 55%,#c9c9cc)"></div>
<div style="left:1583px;top:287px;width:7px;height:1px;background:#3a3a3a"></div>
<div style="left:1583px;top:290px;width:7px;height:1px;background:#3a3a3a"></div>
<div style="left:1583px;top:293px;width:7px;height:1px;background:#3a3a3a"></div>
<div style="left:281px;top:713px;width:1297px;height:17px;background:linear-gradient(#e3e3e3,#f0f0f0 30%,#f0f0f0 70%,#e8e8e8)"></div>
<div style="left:287px;top:717px;width:0;height:0;border-top:4px solid transparent;border-bottom:4px solid transparent;border-right:4px solid #3c3c3c"></div>
<div style="left:1568px;top:717px;width:0;height:0;border-top:4px solid transparent;border-bottom:4px solid transparent;border-left:4px solid #3c3c3c"></div>
<div style="left:299px;top:713px;width:1224px;height:16px;border:1px solid #979797;border-radius:2px;background:linear-gradient(#f8f8f8,#e9e9e9 45%,#d6d6d8 55%,#c9c9cc)"></div>
<div style="left:908px;top:718px;width:1px;height:7px;background:#3a3a3a"></div>
<div style="left:911px;top:718px;width:1px;height:7px;background:#3a3a3a"></div>
<div style="left:914px;top:718px;width:1px;height:7px;background:#3a3a3a"></div>
<div style="left:1578px;top:713px;width:17px;height:17px;background:#f0f0f0"></div>
<div style="left:0px;top:740px;width:1600px;height:19px;background:#dadada;border:1px solid #bdbdbd"></div>
<svg style="position:absolute;left:1571px;top:744px" width="26" height="11"><rect x="2.5" y="1.5" width="5" height="5" fill="none" stroke="#000" stroke-width="1"/><rect x="2" y="1" width="6" height="2" fill="#000"/><rect x="0.5" y="4.5" width="5" height="5" fill="#dadada" stroke="#000" stroke-width="1"/><rect x="0" y="4" width="6" height="2" fill="#000"/><path d="M16.5,2.5 L23.5,9 M23.5,2.5 L16.5,9" stroke="#000" stroke-width="1.7"/></svg>
<div style="left:0px;top:761px;width:1600px;height:71px;border-top:1px solid #828790;border-right:1px solid #dde3ea;border-bottom:1px solid #e3e8ee;background:#fff"></div>
<div class="t" style="left:4.60px;top:762.97px;font-size:11.05px;line-height:13px;transform:scaleX(0.9173);transform-origin:0 0;"><span style="color:#0000ff">ECU uses SDS</span> <span style="color:#ffa500">10C0</span></div>
<div class="t" style="left:4.60px;top:775.97px;font-size:11.05px;line-height:13px;transform:scaleX(0.9173);transform-origin:0 0;"><span style="color:#ff0000">Bad ELM response :</span> WRONG RESPONSE : Unknown</div>
<div class="t" style="left:4.60px;top:788.97px;font-size:11.05px;line-height:13px;transform:scaleX(0.9173);transform-origin:0 0;"><span style="color:#ff0000">Bad ELM response :</span> WRONG RESPONSE : Unknown</div>
<div class="t" style="left:4.60px;top:801.97px;font-size:11.05px;line-height:13px;transform:scaleX(0.9173);transform-origin:0 0;"><span style="color:#ff0000">Bad ELM response :</span> WRONG RESPONSE : Unknown</div>
<div class="t" style="left:4.60px;top:814.97px;font-size:11.05px;line-height:13px;transform:scaleX(0.9173);transform-origin:0 0;"><span style="color:#ff0000">Bad ELM response :</span> WRONG RESPONSE : Unknown</div>
<div style="left:1583px;top:762px;width:16px;height:69px;background:linear-gradient(90deg,#e3e3e3,#f0f0f0 30%,#f0f0f0 70%,#e8e8e8)"></div>
<svg style="position:absolute;left:1587px;top:768px" width="9" height="6"><polygon points="0.5,5 8.5,5 4.5,1" fill="#3c3c3c"/></svg>
<svg style="position:absolute;left:1587px;top:820px" width="9" height="6"><polygon points="0.5,1 8.5,1 4.5,5" fill="#3c3c3c"/></svg>
<div style="left:1583px;top:797px;width:15px;height:16px;border:1px solid #979797;border-radius:2px;background:linear-gradient(90deg,#f8f8f8,#e9e9e9 45%,#d6d6d8 55%,#c9c9cc)"></div>
<div style="left:0;top:831px;width:1600px;height:29px;background:#f0f0f0"></div>
<div style="left:2px;top:835px;width:100px;height:23px;background:#008000"></div>
<div class="t" style="left:21.90px;top:840.12px;font-size:12.65px;line-height:15px;transform:scaleX(0.8585);transform-origin:0 0;">CONNECTÉ</div>
<div class="t" style="left:108.40px;top:839.57px;font-size:12.50px;line-height:15px;transform:scaleX(0.8706);transform-origin:0 0;">DiagOnCan (Tx 0x7E0/Rx 0x7E8)</div>
<div style="left:309px;top:835px;width:1px;height:23px;background:#d0d0d0"></div>
<div style="left:465px;top:835px;width:1px;height:23px;background:#d0d0d0"></div>
<div style="left:628px;top:835px;width:1px;height:23px;background:#d0d0d0"></div>
<div style="left:678px;top:835px;width:1px;height:23px;background:#d0d0d0"></div>
<div style="left:835px;top:835px;width:1px;height:23px;background:#d0d0d0"></div>
<div style="left:886px;top:835px;width:1px;height:23px;background:#d0d0d0"></div>
<div style="left:1091px;top:835px;width:1px;height:23px;background:#d0d0d0"></div>
<div style="left:314px;top:835px;width:116px;height:23px;border:1px solid #8b8b8b;border-radius:2px;background:#e8e8e8"></div>
<div style="left:315px;top:836px;width:114px;height:21px;background:linear-gradient(#b4f0b4,#a8eaa8 25%,#00c82a 30%,#00d030 80%,#00b828)"></div>
<div style="left:315px;top:842px;width:114px;height:15px;background:linear-gradient(90deg,rgba(0,80,0,0.35),rgba(0,0,0,0) 12%,rgba(0,0,0,0) 88%,rgba(0,80,0,0.35))"></div>
<div class="t" style="left:431.40px;top:839.57px;font-size:12.50px;line-height:15px;transform:scaleX(0.8938);transform-origin:0 0;">100%</div>
<div class="t" style="left:469.70px;top:839.47px;font-size:12.79px;line-height:15px;transform:scaleX(0.9093);transform-origin:0 0;">Vitesse rafraichissement (ms):</div>
<div style="left:632px;top:836px;width:45px;height:21px;border:1px solid #e3e9ef;border-top-color:#abadb3;background:#fff"></div>
<div class="t" style="left:635.80px;top:839.02px;font-size:12.94px;line-height:16px;transform:scaleX(0.8147);transform-origin:0 0;">100</div>
<div style="left:662px;top:838px;width:13px;height:8px;border:1px solid #b8b8b8;background:linear-gradient(#fafafa,#e4e4e4)"></div>
<div style="left:662px;top:847px;width:13px;height:8px;border:1px solid #b8b8b8;background:linear-gradient(#fafafa,#e4e4e4)"></div>
<div style="left:665px;top:840px;width:0;height:0;border-left:3px solid transparent;border-right:3px solid transparent;border-bottom:3px solid #4a5f9a"></div>
<div style="left:665px;top:850px;width:0;height:0;border-left:3px solid transparent;border-right:3px solid transparent;border-top:3px solid #4a5f9a"></div>
<div class="t" style="left:683.50px;top:839.47px;font-size:12.79px;line-height:15px;transform:scaleX(0.9227);transform-origin:0 0;">Can timeout (ms) [0:AUTO] :</div>
<div style="left:839px;top:836px;width:45px;height:21px;border:1px solid #e3e9ef;border-top-color:#abadb3;background:#fff"></div>
<div class="t" style="left:842.50px;top:839.02px;font-size:12.94px;line-height:16px;transform:scaleX(1.0446);transform-origin:0 0;">0</div>
<div style="left:869px;top:838px;width:13px;height:8px;border:1px solid #b8b8b8;background:linear-gradient(#fafafa,#e4e4e4)"></div>
<div style="left:869px;top:847px;width:13px;height:8px;border:1px solid #b8b8b8;background:linear-gradient(#fafafa,#e4e4e4)"></div>
<div style="left:872px;top:840px;width:0;height:0;border-left:3px solid transparent;border-right:3px solid transparent;border-bottom:3px solid #4a5f9a"></div>
<div style="left:872px;top:850px;width:0;height:0;border-left:3px solid transparent;border-right:3px solid transparent;border-top:3px solid #4a5f9a"></div>
<div class="t" style="left:890.30px;top:839.47px;font-size:12.79px;line-height:15px;transform:scaleX(0.9065);transform-origin:0 0;">Found 12 ecu</div>
<div style="left:0;top:858px;width:1600px;height:1px;background:#fafafa"></div>
<div style="left:0;top:859px;width:1600px;height:1px;background:#0d1a28"></div>
<div style="left:0;top:860px;width:1600px;height:8px;overflow:hidden;background:linear-gradient(90deg,#1f4f84 0,#3a78b4 60px,#5f9ccc 90px,#3a7cba 130px,#2f78ba 300px,#3480c2 500px,#2f7dc0 700px,#3f8cca 1000px,#7fb8e0 1080px,#3a82c0 1110px,#2a6aa8 1200px,#1d5690 1400px,#1a4c82 1560px)"><div style="left:0;top:0;width:1600px;height:8px;background:linear-gradient(rgba(255,255,255,0.35),rgba(255,255,255,0.1) 60%,rgba(255,255,255,0))"></div><div style="left:12px;top:1px;width:29px;height:16px;border-radius:50%;background:radial-gradient(#f4f6f8,#b8c4d0);border:1px solid #405870"></div><div style="left:85px;top:1px;width:18px;height:10px;border-radius:50%;border:2px solid #f0c020;border-bottom-color:transparent"></div><div style="left:121px;top:1px;width:59px;height:10px;border:1px solid #1a3050;border-radius:3px;background:linear-gradient(#d8eaf6,#a6cbe8)"><div style="left:18px;top:1px;width:24px;height:8px;border:1px solid #6a8aa8;background:#dde8f0"></div></div><div style="left:197px;top:1px;width:18px;height:10px;border-radius:50%;background:#58c8f0"></div><div style="left:246px;top:1px;width:58px;height:10px;border:1px solid #1a3050;border-radius:3px;background:linear-gradient(#d8eaf6,#a6cbe8)"><div style="left:17px;top:1px;width:18px;height:12px;border-radius:50%;border:2px solid #e03030;background:#f0f0f0"></div></div><div style="left:326px;top:1px;width:18px;height:12px;border-radius:50%;background:#d83a2a"></div><div style="left:384px;top:1px;width:20px;height:10px;background:#2a8a40;clip-path:polygon(100% 0,100% 100%,0 100%)"></div><div style="left:448px;top:2px;width:16px;height:10px;background:#e8c060"></div><div style="left:510px;top:1px;width:18px;height:10px;background:#2060b0;clip-path:polygon(100% 0,100% 100%,0 100%)"></div><div style="left:555px;top:1px;width:59px;height:10px;border:1px solid #1a3050;border-radius:3px;background:linear-gradient(#d8eaf6,#a6cbe8)"><div style="left:13px;top:1px;width:30px;height:8px;border:2px solid #f0a800;background:#1a1a1a"></div></div><div style="left:617px;top:1px;width:59px;height:10px;border:1px solid #1a3050;border-radius:3px;background:linear-gradient(#d8eaf6,#a6cbe8)"><div style="left:13px;top:2px;width:30px;height:8px;border:1px solid #505050;background:#888"></div></div><div style="left:1562px;top:1px;width:38px;height:10px;border:1px solid #203850;background:linear-gradient(90deg,rgba(255,255,255,0.2),rgba(255,255,255,0.35))"></div></div></body></html>
